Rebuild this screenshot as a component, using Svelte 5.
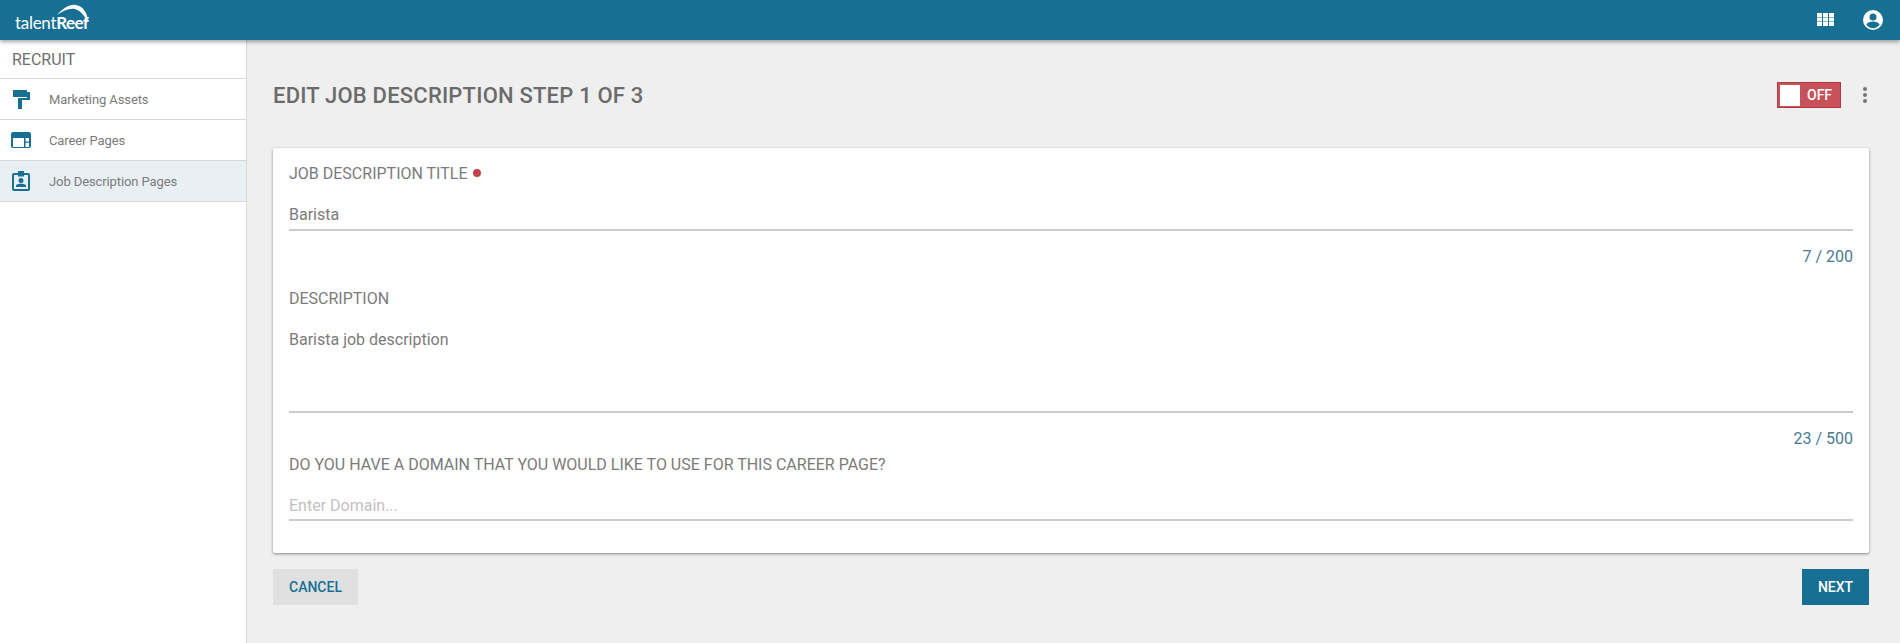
<script>
    const navItems = [
        { label: "Marketing Assets", icon: "roller" },
        { label: "Career Pages", icon: "page" },
        { label: "Job Description Pages", icon: "badge", active: true }
    ];
</script>

<div class="app">
    <header class="topbar">
        <div class="logo">
            <svg class="swoosh" viewBox="0 0 34 24" width="34" height="24" aria-hidden="true">
                <path d="M1 11 C7 4 14 0 20 1 C27 2 32 9 32 19 C29 12 25 7 19 5 C13 4 7 7 1 11 Z" fill="#fff" />
            </svg>
            <span class="logo-text">talent<b>Reef</b></span>
        </div>
        <div class="top-icons">
            <svg viewBox="0 0 18 14" width="18" height="14" aria-hidden="true">
                <path fill="#fff" d="M0 0h5v4H0zM6 0h5v4H6zM12 0h5v4h-5zM0 4.500h5v4H0zM6 4.500h5v4H6zM12 4.500h5v4h-5zM0 9h5v4H0zM6 9h5v4H6zM12 9h5v4h-5z" />
            </svg>
            <svg viewBox="0 0 24 24" width="24" height="24" aria-hidden="true">
                <path fill="#fff" d="M12 2a10 10 0 1 0 0 20 10 10 0 0 0 0-20zm0 3.500a3.500 3.500 0 1 1 0 7 3.500 3.500 0 0 1 0-7zm0 14.700a8 8 0 0 1-6.500-3.400c.1-2.200 4.400-3.300 6.500-3.300s6.400 1.100 6.500 3.300a8 8 0 0 1-6.500 3.400z" />
            </svg>
        </div>
    </header>

    <div class="body">
        <nav class="sidebar">
            <div class="side-title">RECRUIT</div>
            {#each navItems as item}
                <div class="nav-item" class:active={item.active}>
                    <span class="nav-icon">
                        {#if item.icon === "roller"}
                            <svg viewBox="0 0 20 21" width="20" height="21" aria-hidden="true">
                                <path fill="#186f94" d="M2 1h14v7H2zM16 3h3v8h-3zM7 9h12v2H7zM7 11h4v9H7z" />
                            </svg>
                        {:else if item.icon === "page"}
                            <svg viewBox="0 0 20 16" width="20" height="16" aria-hidden="true">
                                <path fill="#186f94" fill-rule="evenodd" d="M2 0h16a2 2 0 0 1 2 2v12a2 2 0 0 1-2 2H2a2 2 0 0 1-2-2V2a2 2 0 0 1 2-2zM2 6v9h11V6zM14.500 6v3.500H18V6zM14.500 10.800V15H18v-4.200z" />
                            </svg>
                        {:else}
                            <svg viewBox="-1 0 20 20" width="20" height="20" aria-hidden="true">
                                <path fill="#186f94" fill-rule="evenodd" d="M2 2h4V0h6v2h4a2 2 0 0 1 2 2v14a2 2 0 0 1-2 2H2a2 2 0 0 1-2-2V4a2 2 0 0 1 2-2zM2 4v14h14V4h-4v1.500H6V4zM9 7a2.500 2.500 0 1 1 0 5 2.500 2.500 0 0 1 0-5zM4 16v-1.200C4 13.300 7 12.800 9 12.800s5 .5 5 2V16z" />
                            </svg>
                        {/if}
                    </span>
                    <span>{item.label}</span>
                </div>
            {/each}
        </nav>

        <main class="content">
            <div class="page-head">
                <h1>EDIT JOB DESCRIPTION STEP 1 OF 3</h1>
                <div class="head-actions">
                    <div class="toggle">
                        <span class="knob"></span>
                        <span class="toggle-label">OFF</span>
                    </div>
                    <div class="dots"><i></i><i></i><i></i></div>
                </div>
            </div>

            <section class="card">
                <div class="field title-field">
                    <div class="label">JOB DESCRIPTION TITLE <span class="req"></span></div>
                    <div class="value">Barista</div>
                </div>
                <div class="counter">7 / 200</div>

                <div class="field desc-field">
                    <div class="label">DESCRIPTION</div>
                    <div class="value tall">Barista job description</div>
                </div>
                <div class="counter">23 / 500</div>

                <div class="field domain-field">
                    <div class="label">DO YOU HAVE A DOMAIN THAT YOU WOULD LIKE TO USE FOR THIS CAREER PAGE?</div>
                    <div class="value placeholder">Enter Domain...</div>
                </div>
            </section>

            <div class="actions">
                <button class="cancel">CANCEL</button>
                <button class="next">NEXT</button>
            </div>
        </main>
    </div>
</div>

<style>
    :global(body) {
        margin: 0;
        font-family: Roboto, "Liberation Sans", sans-serif;
        background: #efefef;
    }
    .app {
        height: 643px;
        display: flex;
        flex-direction: column;
        overflow: hidden;
    }
    .topbar {
        position: relative;
        z-index: 2;
        flex: 0 0 40px;
        height: 40px;
        box-sizing: border-box;
        background: #186f94;
        box-shadow: 0 2px 4px rgba(0, 0, 0, 0.35);
        display: flex;
        justify-content: space-between;
        align-items: center;
        padding: 0 15px 1px 15px;
    }
    .logo {
        position: relative;
        color: #fff;
        width: 76px;
        height: 39px;
    }
    .swoosh {
        position: absolute;
        left: 41px;
        top: 4px;
    }
    .logo-text {
        position: absolute;
        left: 0;
        top: 12px;
        font-family: Lato, sans-serif;
        font-size: 17px;
        letter-spacing: -0.3px;
        line-height: 21px;
        font-weight: 400;
    }
    .logo-text b {
        font-weight: 700;
        letter-spacing: -0.6px;
    }
    .top-icons {
        display: flex;
        align-items: center;
        gap: 26px;
    }
    .body {
        flex: 1;
        display: flex;
        min-height: 0;
    }
    .sidebar {
        width: 246px;
        flex: 0 0 246px;
        background: #fff;
        border-right: 1px solid #d8d8d8;
    }
    .side-title {
        height: 38px;
        line-height: 39px;
        padding-left: 12px;
        font-size: 16px;
        color: #6f6f6f;
        border-bottom: 1px solid #d8d8d8;
    }
    .nav-item {
        height: 40px;
        display: flex;
        align-items: center;
        font-size: 13px;
        letter-spacing: -0.1px;
        color: #7b7b7b;
        border-bottom: 1px solid #d8d8d8;
    }
    .nav-item.active {
        background: #e9f0f4;
    }
    .nav-icon {
        width: 49px;
        padding-left: 11px;
        box-sizing: border-box;
        display: flex;
        align-items: center;
    }
    .content {
        flex: 1;
        padding: 0 31px 0 26px;
        min-width: 0;
    }
    .page-head {
        height: 108px;
        display: flex;
        justify-content: space-between;
        align-items: center;
        box-sizing: border-box;
        padding-top: 2px;
    }
    h1 {
        margin: 0;
        font-size: 22px;
        font-weight: 500;
        letter-spacing: 0.2px;
        color: #6b6b6b;
    }
    .head-actions {
        display: flex;
        align-items: center;
        gap: 22px;
    }
    .toggle {
        width: 64px;
        height: 26px;
        box-sizing: border-box;
        background: #c8525a;
        border: 1px solid #b03a44;
        display: flex;
        align-items: center;
        padding-left: 2px;
        gap: 7px;
    }
    .knob {
        width: 20px;
        height: 21px;
        background: #fff;
    }
    .toggle-label {
        color: #fff;
        font-size: 14px;
        font-weight: 500;
    }
    .dots {
        display: flex;
        flex-direction: column;
        gap: 2px;
        margin-right: 2px;
    }
    .dots i {
        width: 4px;
        height: 4px;
        border-radius: 50%;
        background: #757575;
    }
    .card {
        height: 405px;
        box-sizing: border-box;
        background: #fff;
        border-radius: 2px;
        box-shadow: 0 1px 3px rgba(0, 0, 0, 0.45);
        padding: 16px 16px 0;
    }
    .label {
        height: 18px;
        line-height: 19px;
        font-size: 16px;
        color: #7b7b7b;
        display: flex;
        align-items: center;
        gap: 5px;
    }
    .req {
        width: 8px;
        height: 8px;
        border-radius: 50%;
        background: #c1444c;
    }
    .value {
        margin-top: 14px;
        height: 33px;
        line-height: 37px;
        font-size: 16px;
        color: #7b7b7b;
        border-bottom: 2px solid #ccc;
    }
    .value.tall {
        height: 90px;
    }
    .value.placeholder {
        color: #c2c2c2;
        height: 32px;
    }
    .counter {
        text-align: right;
        font-size: 16px;
        color: #4a7a94;
        height: 18px;
        line-height: 18px;
        margin-top: 17px;
    }
    .desc-field {
        margin-top: 23px;
    }
    .counter + .domain-field {
        margin-top: 7px;
    }
    .actions {
        margin-top: 16px;
        display: flex;
        justify-content: space-between;
    }
    button {
        height: 36px;
        border: 0;
        border-radius: 0;
        font-family: inherit;
        font-size: 14px;
        font-weight: 500;
        padding: 0;
    }
    .cancel {
        width: 85px;
        background: #e0e0e0;
        color: #186f94;
    }
    .next {
        width: 67px;
        background: #186f94;
        color: #fff;
    }
</style>
